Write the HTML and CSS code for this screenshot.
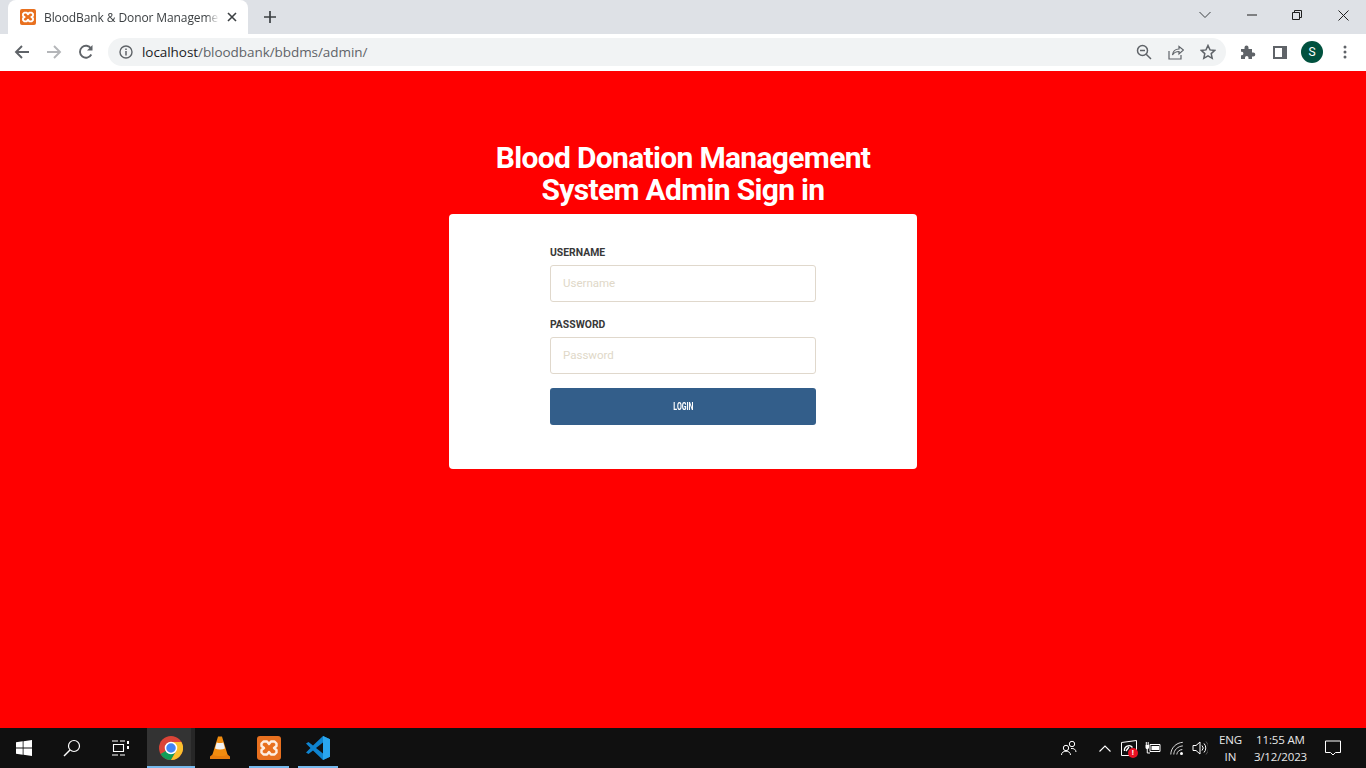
FILE: index.html
```html
<!DOCTYPE html>
<html lang="en">
<head>
<meta charset="utf-8">
<title>BloodBank &amp; Donor Management</title>
<link rel="stylesheet" href="styles.css">
</head>
<body>
<div class="screen">
  <header class="chrome">
    <div class="tabstrip">
      <div class="tab">
        <svg class="favicon" viewBox="0 0 24 24" width="16" height="16"><rect width="24" height="24" rx="3" fill="#e8701f"/><path d="M6.500 5.500h3.500l2 2.500 2-2.500h3.500l2 2v2.500L17 12l2.500 2v2.500l-2 2H14l-2-2.500-2 2.500H6.500l-2-2V14L7 12 4.500 10V7.500z" fill="none" stroke="#fff" stroke-width="2.800" stroke-linejoin="round"/></svg>
        <span class="tab-title">BloodBank &amp; Donor Managemen</span>
        <svg class="tab-close" viewBox="0 0 10 10" width="10" height="10"><path d="M1 1l8 8M9 1l-8 8" stroke="#3c4043" stroke-width="1.600"/></svg>
      </div>
      <svg class="newtab" viewBox="0 0 12 12" width="12" height="12"><path d="M6 0v12M0 6h12" stroke="#3c4043" stroke-width="1.700"/></svg>
      <div class="winctl">
        <svg viewBox="0 0 12 8" width="12" height="8"><path d="M.5 1L6 6.500 11.500 1" fill="none" stroke="#3c4043"/></svg>
        <svg viewBox="0 0 10 2" width="10" height="2"><path d="M0 1h10" stroke="#1f1f1f"/></svg>
        <svg viewBox="0 0 10 10" width="10" height="10"><path d="M.5 2.500h7v7h-7zM2.500 2.500v-2h7v7h-2" fill="none" stroke="#1f1f1f"/></svg>
        <svg viewBox="0 0 11 11" width="11" height="11"><path d="M.5.500l10 10M10.500.500l-10 10" stroke="#1f1f1f"/></svg>
      </div>
    </div>
    <div class="toolbar">
      <svg class="nav" viewBox="0 0 16 16" width="16" height="16"><path d="M15 8H2M8 2L2 8l6 6" fill="none" stroke="#5f6368" stroke-width="1.900"/></svg>
      <svg class="nav" viewBox="0 0 16 16" width="16" height="16"><path d="M1 8h13M8 2l6 6-6 6" fill="none" stroke="#b4b6b9" stroke-width="1.900"/></svg>
      <svg class="nav" viewBox="0 0 16 16" width="16" height="16"><path d="M13.300 10.500A6 6 0 1 1 13 4.500" fill="none" stroke="#5f6368" stroke-width="1.900"/><path d="M14.500 1v5.500H9z" fill="#5f6368"/></svg>
      <div class="omnibox">
        <svg class="info" viewBox="0 0 14 14" width="14" height="14"><circle cx="7" cy="7" r="6" fill="none" stroke="#5f6368" stroke-width="1.400"/><path d="M7 6v4.500M7 3.500v1.500" stroke="#5f6368" stroke-width="1.500"/></svg>
        <span class="url"><span class="host">localhost</span>/bloodbank/bbdms/admin/</span>
        <div class="omni-icons">
          <svg viewBox="0 0 16 16" width="16" height="16"><circle cx="6.500" cy="6.500" r="5" fill="none" stroke="#5f6368" stroke-width="1.500"/><path d="M10.200 10.200L15 15M4 6.500h5" stroke="#5f6368" stroke-width="1.500"/></svg>
          <svg viewBox="0 0 16 16" width="16" height="16"><path d="M1 7v8h12v-4M4.500 11c.5-4 3.500-6 6.500-6V2.500L15.500 6 11 10V7.500c-3 0-5 1-6.500 3.500z" fill="none" stroke="#5f6368" stroke-width="1.200"/></svg>
          <svg viewBox="0 0 16 16" width="16" height="16"><path d="M8 1.500l2 4.400 4.800.5-3.600 3.200 1 4.700L8 11.900l-4.200 2.400 1-4.700L1.200 6.400 6 5.900z" fill="none" stroke="#5f6368" stroke-width="1.500"/></svg>
        </div>
      </div>
      <div class="tool-icons">
        <svg viewBox="0 0 16 16" width="16" height="16"><path d="M1 5h3.500V3.500a2 2 0 0 1 4 0V5H12v3.500h1.300a2 2 0 0 1 0 4H12V15H8.500v-1.300a1.700 1.700 0 0 0-3.500 0V15H1v-3.800h1a1.800 1.800 0 0 0 0-3.500H1z" fill="#5f6368"/></svg>
        <svg viewBox="0 0 14 13" width="14" height="13"><path d="M0 0h14v13H0z" fill="#5f6368"/><path d="M2 2h7v9H2z" fill="#fff"/></svg>
        <span class="avatar">S</span>
        <svg class="kebab" viewBox="0 0 4 14" width="4" height="14"><circle cx="2" cy="2" r="1.500" fill="#5f6368"/><circle cx="2" cy="7" r="1.500" fill="#5f6368"/><circle cx="2" cy="12" r="1.500" fill="#5f6368"/></svg>
      </div>
    </div>
  </header>

  <main class="page">
    <h1 class="heading">Blood Donation Management<br>System Admin Sign in</h1>
    <form class="card">
      <div class="field">
        <label class="label" for="u">USERNAME</label>
        <input class="input" id="u" type="text" placeholder="Username">
      </div>
      <div class="field">
        <label class="label" for="p">PASSWORD</label>
        <input class="input" id="p" type="password" placeholder="Password">
      </div>
      <button class="login" type="button"><span class="login-text">LOGIN</span></button>
    </form>
  </main>

  <footer class="taskbar">
    <div class="task-left">
      <span class="tb tb-start"><svg viewBox="0 0 16 16" width="16" height="16"><path d="M0 2.300l6.700-1v6.300H0zM7.500 1.200L16 0v7.600H7.500zM0 8.400h6.700v6.300l-6.700-1zM7.500 8.400H16V16l-8.500-1.200z" fill="#fff"/></svg></span>
      <span class="tb tb-search"><svg viewBox="0 0 18 18" width="18" height="18"><circle cx="11" cy="7" r="5.500" fill="none" stroke="#fff" stroke-width="1.200"/><path d="M7 11l-6 6" stroke="#fff" stroke-width="1.500"/></svg></span>
      <span class="tb tb-view"><svg viewBox="0 0 17 16" width="17" height="16"><path d="M1.500 4.500h10v7h-10zM0 1h6M8 1h5M0 15h6M8 15h5" fill="none" stroke="#fff" stroke-width="1.100"/><path d="M15 1h2v3h-2zM15 6h2v3h-2z" fill="#fff"/></svg></span>
      <span class="tb tb-app is-active">
        <svg viewBox="0 0 24 24" width="24" height="24"><circle cx="12" cy="12" r="12" fill="#db4437"/><path d="M12 12L1.600 18A12 12 0 0 0 12 24l5.200-9z" fill="#0f9d58"/><path d="M12 6h10.400A12 12 0 0 1 12 24l5.200-9z" fill="#fbc02d"/><circle cx="12" cy="12" r="5.500" fill="#4285f4" stroke="#fff" stroke-width="1.500"/></svg>
      </span>
      <span class="tb tb-app">
        <svg viewBox="0 0 20 24" width="20" height="24"><path d="M8 .5h4l6 19.500H2z" fill="#f28c0f"/><path d="M6.700 6.500c2 .8 4.600.8 6.600 0l1.700 6c-3 1.200-7 1.200-10 0z" fill="#f2f2f2"/><path d="M0 20.500l2.500-2c3 2 12 2 15 0l2.500 2v2.500H0z" fill="#e87d0d"/></svg>
      </span>
      <span class="tb tb-app is-open">
        <svg viewBox="0 0 24 24" width="24" height="24"><rect width="24" height="24" rx="3" fill="#e8701f"/><path d="M6.500 5.500h3.500l2 2.500 2-2.500h3.500l2 2v2.500L17 12l2.500 2v2.500l-2 2H14l-2-2.500-2 2.500H6.500l-2-2V14L7 12 4.500 10V7.500z" fill="none" stroke="#fdeee2" stroke-width="2.400" stroke-linejoin="round"/></svg>
      </span>
      <span class="tb tb-app is-open">
        <svg viewBox="0 0 24 24" width="24" height="24"><path d="M17 0l7 3.300v17.400L17 24 7 14.500 2.500 18 0 16.500 4.500 12 0 7.500 2.500 6 7 9.500z" fill="#0f84d0"/><path d="M17 6.500L10 12l7 5.500z" fill="#111"/><path d="M17 0l7 3.300v17.400L17 24z" fill="#2aa6ef"/></svg>
      </span>
    </div>
    <div class="tray">
      <svg class="tr-people" viewBox="0 0 16 16" width="16" height="16"><circle cx="5" cy="8" r="2.700" fill="none" stroke="#fff"/><circle cx="11" cy="4" r="2.700" fill="none" stroke="#fff"/><path d="M.5 15c0-2.500 2-3.800 4.500-3.800S9.500 12.500 9.500 15M10 8.500c2.500-.5 5 1 5 3.500" fill="none" stroke="#fff"/></svg>
      <svg class="tr-up" viewBox="0 0 12 7" width="12" height="7"><path d="M.5 6.500L6 1l5.500 5.500" fill="none" stroke="#fff" stroke-width="1.100"/></svg>
      <span class="tr-alert">
        <svg viewBox="0 0 16 16" width="16" height="16"><path d="M.5 2.500L15.500.5v15H.5z" fill="none" stroke="#fff"/><path d="M3.500 11a4.500 4.500 0 0 1 8-3.500M5 11l3-4" fill="none" stroke="#fff" stroke-width="1.300"/></svg>
        <span class="badge">!</span>
      </span>
      <svg class="tr-batt" viewBox="0 0 16 12" width="16" height="12"><path d="M5 2.500h10v7H5z" fill="none" stroke="#fff"/><path d="M6.500 4h7.500v4H6.500zM.5 3h3.500v2.500a1.500 1.500 0 0 1-3.500 0z" fill="#fff"/><path d="M1.300 0v3M3.200 0v3M2.250 7v4H5" fill="none" stroke="#fff"/></svg>
      <svg class="tr-wifi" viewBox="0 0 16 14" width="16" height="14"><path d="M.8 13.500C.8 7 6 1.800 12.800 1.300M3.800 13.500c0-4.500 4-8.200 9-8.600M6.800 13.500c0-2.500 2.500-4.800 5.500-5" fill="none" stroke="#d8d8d8"/><circle cx="11.500" cy="12.500" r="1.500" fill="#fff"/></svg>
      <svg class="tr-vol" viewBox="0 0 16 14" width="16" height="14"><path d="M1 4.500h3L8 1v12L4 9.500H1z" fill="none" stroke="#fff"/><path d="M10 4.500a3.500 3.500 0 0 1 0 5M12 2.500a6.500 6.500 0 0 1 0 9" fill="none" stroke="#fff"/><path d="M14 .5a9.500 9.500 0 0 1 0 13" fill="none" stroke="#555"/></svg>
      <div class="lang"><span>ENG</span><span>IN</span></div>
      <div class="clock"><span>11:55 AM</span><span>3/12/2023</span></div>
      <svg class="tr-note" viewBox="0 0 16 16" width="16" height="16"><path d="M.5 1h15v11.500h-5L8 15l-2.500-2.500h-5z" fill="none" stroke="#fff"/></svg>
    </div>
  </footer>
</div>
</body>
</html>
```

FILE: styles.css
```css
* { box-sizing: border-box; }
html, body { margin: 0; height: 100%; overflow: hidden; }
body { font-family: Roboto, "Liberation Sans", sans-serif; }
svg { display: block; flex: none; }

.screen { width: 1366px; height: 768px; display: flex; flex-direction: column; }

/* Browser chrome */
.chrome { height: 71px; flex: none; background: #fff; }
.tabstrip { height: 34px; background: #dee1e6; display: flex; align-items: center; padding-left: 8px; }
.tab { width: 240px; height: 34px; background: #fff; border-radius: 8px 8px 0 0; display: flex; align-items: center; padding-left: 12px; }
.favicon { margin-right: 8px; }
.tab-title { width: 175px; white-space: nowrap; font: 12px "Open Sans", "Liberation Sans", sans-serif; letter-spacing: -.1px; color: #3c4043; -webkit-mask-image: linear-gradient(to right, #000 162px, transparent 175px); mask-image: linear-gradient(to right, #000 162px, transparent 175px); }
.tab-close { margin-left: 8px; }
.newtab { margin-left: 16px; }
.winctl { margin-left: auto; display: flex; align-items: center; width: 167px; justify-content: space-between; padding-right: 17px; margin-top: -4px; }

.toolbar { height: 37px; display: flex; align-items: center; padding: 0 0 1px 14px; }
.nav { margin-right: 16px; }
.toolbar .nav:nth-child(3) { margin-right: 14px; }
.omnibox { width: 1118px; height: 28px; border-radius: 14px; background: #f1f3f4; display: flex; align-items: center; padding-left: 11px; }
.info { margin-right: 9px; }
.url { font: 13.500px "Open Sans", "Liberation Sans", sans-serif; color: #5f6368; white-space: nowrap; letter-spacing: -.06px; }
.host { color: #202124; }
.omni-icons { margin-left: auto; display: flex; gap: 16px; padding-right: 10px; }
.tool-icons { display: flex; align-items: center; padding-left: 14px; }
.tool-icons svg:nth-child(1) { margin-right: 17px; }
.tool-icons svg:nth-child(2) { margin-right: 14px; }
.avatar { width: 22px; height: 22px; border-radius: 50%; background: #00513e; color: #fff; font-size: 12px; display: flex; align-items: center; justify-content: center; }
.kebab { margin-left: 20px; }

/* Page */
.page { flex: 1; background: #f00; display: flex; flex-direction: column; align-items: center; padding-top: 71px; }
.heading { margin: 0; height: 72px; width: 467px; text-align: center; color: #fff; font: 700 30px/32px Roboto, sans-serif; letter-spacing: -.68px; }
.card { width: 468px; height: 255px; background: #fff; border-radius: 4px; padding: 32px 101px 0; }
.field { margin-bottom: 14px; }
.field + .field { margin-top: 16px; }
.label { display: block; font: 700 10.400px/14px Roboto, sans-serif; color: #383838; margin-bottom: 5px; }
.input { display: block; width: 266px; height: 37px; border: 1px solid #e0d8cc; border-radius: 3px; padding: 0 12px 2px; font: 11.500px Roboto, sans-serif; outline: none; background: #fff; }
.input::placeholder { color: #e0d8c8; opacity: 1; }
.login { display: block; width: 266px; height: 37px; border: 0; border-radius: 3px; background: #335e8a; color: #fff; padding: 0 0 2px; }
.login-text { display: inline-block; font: 700 10px Roboto, sans-serif; transform: scaleX(.7); }

/* Taskbar */
.taskbar { height: 40px; flex: none; background: #101010; display: flex; justify-content: space-between; color: #fff; }
.task-left { display: flex; }
.tb { display: flex; align-items: center; justify-content: center; height: 40px; }
.tb-start, .tb-search { width: 48px; }
.tb-view { width: 48px; margin-right: 3px; }
.tb-app { width: 49px; position: relative; }
.tb-app.is-active { width: 48px; padding-right: 1px; background: linear-gradient(to right, #333 44px, #272727 44px); box-shadow: inset 0 -2px 0 #76b9ed; }
.tb-app.is-open::after { content: ""; position: absolute; left: 5px; right: 4px; bottom: 0; height: 2px; background: #76b9ed; }
.tray { display: flex; align-items: center; }
.tr-people { margin-right: 22px; }
.tr-up { margin-right: 10px; }
.tr-alert { position: relative; margin-right: 8px; }
.badge { position: absolute; right: -1px; bottom: -2px; width: 10px; height: 10px; border-radius: 50%; background: #e81123; color: #fff; font: 700 8px/10px Roboto, sans-serif; text-align: center; }
.tr-batt { margin-right: 9px; }
.tr-wifi { margin-right: 6px; }
.tr-vol { margin-right: 11px; }
.lang, .clock { display: flex; flex-direction: column; align-items: center; font: 11.500px/17px "Open Sans", "Liberation Sans", sans-serif; letter-spacing: -.15px; color: #e8e8e8; }
.lang { margin-right: 12px; }
.clock { margin-right: 18px; }
.tr-note { margin-right: 25px; }
```
